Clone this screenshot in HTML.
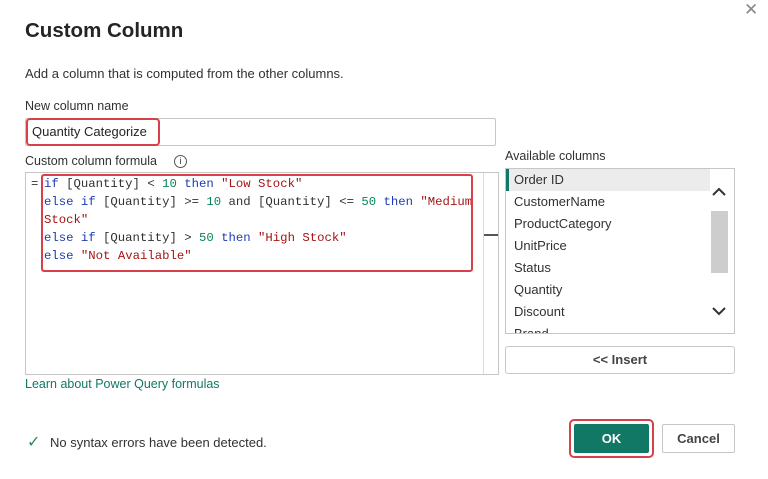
<!DOCTYPE html>
<html><head><meta charset="utf-8"><style>
*{margin:0;padding:0;box-sizing:border-box}
body{width:768px;height:479px;background:#fff;font-family:"Liberation Sans",sans-serif;color:#323130;position:relative;overflow:hidden}
.a{position:absolute}
.mono{font-family:"Liberation Mono",monospace;font-size:12.3px;line-height:18px;white-space:pre}
.kw{color:#1f3cb0}.num{color:#098658}.str{color:#a31515}.id{color:#333}
.li{position:absolute;left:8px;font-size:13px;color:#323130}
</style></head><body>
<div class="a" style="left:744px;top:0px;font-size:17px;color:#888">✕</div>
<div class="a" style="left:25px;top:19px;font-size:20.5px;font-weight:600;color:#252423">Custom Column</div>
<div class="a" style="left:25px;top:66px;font-size:13px">Add a column that is computed from the other columns.</div>
<div class="a" style="left:25px;top:99px;font-size:12.5px">New column name</div>
<div class="a" style="left:25px;top:118px;width:471px;height:28px;border:1px solid #c8c6c4;border-radius:2px"></div>
<div class="a" style="left:26px;top:118px;width:134px;height:28px;border:2px solid #d9414a;border-radius:4px"></div>
<div class="a" style="left:32px;top:124px;font-size:13px;color:#252423">Quantity Categorize</div>
<div class="a" style="left:25px;top:154px;font-size:12.5px">Custom column formula</div>
<div class="a" style="left:174px;top:155px;width:13px;height:13px;border:1px solid #555;border-radius:50%;font-size:9px;text-align:center;line-height:11px">i</div>
<div class="a" style="left:25px;top:172px;width:474px;height:203px;border:1px solid #c8c6c4"></div>
<div class="a" style="left:483px;top:173px;width:1px;height:201px;background:#ddd"></div>
<div class="a" style="left:484px;top:234px;width:14px;height:2px;background:#555"></div>
<div class="a mono" style="left:31px;top:175px;color:#333">=</div>
<div class="a mono" style="left:44px;top:175px"><span class="kw">if</span> [Quantity] &lt; <span class="num">10</span> <span class="kw">then</span> <span class="str">"Low Stock"</span>
<span class="kw">else if</span> [Quantity] &gt;= <span class="num">10</span> and [Quantity] &lt;= <span class="num">50</span> <span class="kw">then</span> <span class="str">"Medium</span>
<span class="str">Stock"</span>
<span class="kw">else if</span> [Quantity] &gt; <span class="num">50</span> <span class="kw">then</span> <span class="str">"High Stock"</span>
<span class="kw">else</span> <span class="str">"Not Available"</span></div>
<div class="a" style="left:41px;top:174px;width:432px;height:98px;border:2px solid #d9414a;border-radius:3px"></div>
<div class="a" style="left:505px;top:149px;font-size:12.5px">Available columns</div>
<div class="a" style="left:505px;top:168px;width:230px;height:166px;border:1px solid #c8c6c4;overflow:hidden">
<div class="a" style="left:0;top:0;width:228px;height:22px;background:#ececec;border-left:3px solid #117865"></div>
<div class="li" style="top:3px">Order ID</div>
<div class="li" style="top:25px">CustomerName</div>
<div class="li" style="top:47px">ProductCategory</div>
<div class="li" style="top:69px">UnitPrice</div>
<div class="li" style="top:91px">Status</div>
<div class="li" style="top:113px">Quantity</div>
<div class="li" style="top:135px">Discount</div>
<div class="li" style="top:157px">Brand</div>
<div class="a" style="left:204px;top:0;width:24px;height:164px;background:#fff"></div>
<div class="a" style="left:205px;top:42px;width:17px;height:62px;background:#cdcdcd"></div>
<svg class="a" style="left:205px;top:18px" width="16" height="10"><path d="M2 8L8 2L14 8" fill="none" stroke="#333" stroke-width="2"/></svg>
<svg class="a" style="left:205px;top:137px" width="16" height="10"><path d="M2 2L8 8L14 2" fill="none" stroke="#333" stroke-width="2"/></svg>
</div>
<div class="a" style="left:505px;top:346px;width:230px;height:28px;border:1px solid #c8c6c4;border-radius:3px;text-align:center;font-size:13px;font-weight:bold;line-height:26px;color:#444">&lt;&lt; Insert</div>
<div class="a" style="left:25px;top:377px;font-size:12.5px;color:#117865">Learn about Power Query formulas</div>
<div class="a" style="left:27px;top:432px;font-size:16px;color:#2e8b57">✓</div>
<div class="a" style="left:50px;top:435px;font-size:13px">No syntax errors have been detected.</div>
<div class="a" style="left:569px;top:419px;width:85px;height:39px;border:2px solid #d9414a;border-radius:5px"></div>
<div class="a" style="left:574px;top:424px;width:75px;height:29px;background:#117865;border-radius:2px;color:#fff;font-weight:bold;font-size:13px;text-align:center;line-height:29px">OK</div>
<div class="a" style="left:662px;top:424px;width:73px;height:29px;border:1px solid #c8c6c4;border-radius:2px;font-size:13px;font-weight:bold;text-align:center;line-height:27px;color:#444">Cancel</div>
</body></html>
